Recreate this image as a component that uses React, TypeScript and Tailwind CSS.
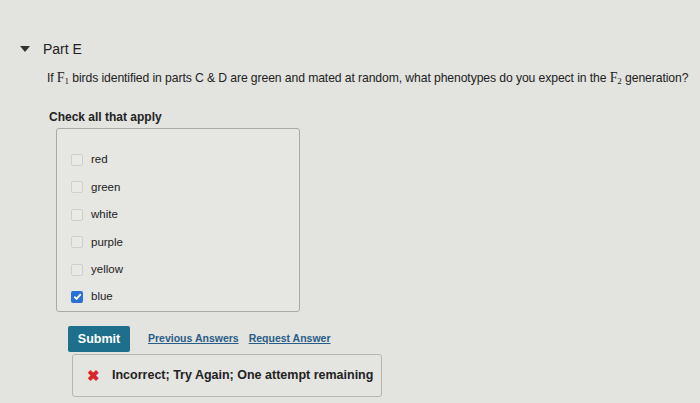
import React from "react";

const options = ["red", "green", "white", "purple", "yellow", "blue"];

export default function App() {
  return (
    <div
      className="w-[700px] h-[403px] overflow-hidden bg-[#e3e3e0] text-[#222]"
      style={{ fontFamily: '"Liberation Sans", Arial, sans-serif' }}
    >
      <div className="pl-[20px] pt-[39px] flex items-center gap-[13px]">
        <svg width="10" height="7" viewBox="0 0 10 7">
          <path d="M0 0 L10 0 L5 6 Z" fill="#333" />
        </svg>
        <span className="text-[14px]">Part E</span>
      </div>
      <div className="pl-[47px] pt-[8px] text-[12.2px] tracking-[-0.1px] flex items-baseline leading-[20px]">
        <span>If&nbsp;</span>
        <span style={{ fontFamily: '"Liberation Serif", serif' }} className="text-[14px]">
          F<sub className="text-[9px]">1</sub>
        </span>
        <span>&nbsp;birds identified in parts C &amp; D are green and mated at random, what phenotypes do you expect in the&nbsp;</span>
        <span style={{ fontFamily: '"Liberation Serif", serif' }} className="text-[14px]">
          F<sub className="text-[9px]">2</sub>
        </span>
        <span>&nbsp;generation?</span>
      </div>
      <div className="pl-[49px] pt-[20px] text-[12px] font-bold">Check all that apply</div>
      <div className="ml-[56px] mt-[2px] w-[244px] h-[184px] border border-[#a9a9a6] rounded-[3px] bg-[#e6e6e3] pt-[23px] pl-[14px] flex flex-col gap-[11.4px]">
        {options.map((o) => {
          const checked = o === "blue";
          return (
            <div key={o} className="flex items-center gap-[8px] h-[16px]">
              {checked ? (
                <div className="w-[12px] h-[12px] rounded-[2px] bg-[#2a6fd6] flex items-center justify-center">
                  <svg width="9" height="9" viewBox="0 0 10 10">
                    <path d="M1.5 5.2 L4 7.6 L8.6 2.4" stroke="white" strokeWidth="2" fill="none" />
                  </svg>
                </div>
              ) : (
                <div className="w-[12px] h-[12px] rounded-[2px] border border-[#cfcfcc] bg-[#e9e9e6]" />
              )}
              <span className="text-[11.5px]">{o}</span>
            </div>
          );
        })}
      </div>
      <div className="pl-[68px] pt-[14px] flex items-center gap-[18px]">
        <button className="w-[62px] h-[26px] bg-[#1d6f8b] text-white text-[12.5px] font-bold rounded-[2px]">
          Submit
        </button>
        <span className="text-[10.5px] font-bold text-[#2a5d87] underline">Previous Answers</span>
        <span className="text-[10.5px] font-bold text-[#2a5d87] underline -ml-[8px]">Request Answer</span>
      </div>
      <div className="ml-[72px] mt-[2px] w-[310px] h-[43px] border border-[#b5b5b2] rounded-[3px] bg-[#e4e4e1] flex items-center pl-[14px] gap-[12px]">
        <span className="text-[#d9262c] text-[15px] font-bold leading-none">✖</span>
        <span className="text-[12.5px] font-bold">Incorrect; Try Again; One attempt remaining</span>
      </div>
    </div>
  );
}
